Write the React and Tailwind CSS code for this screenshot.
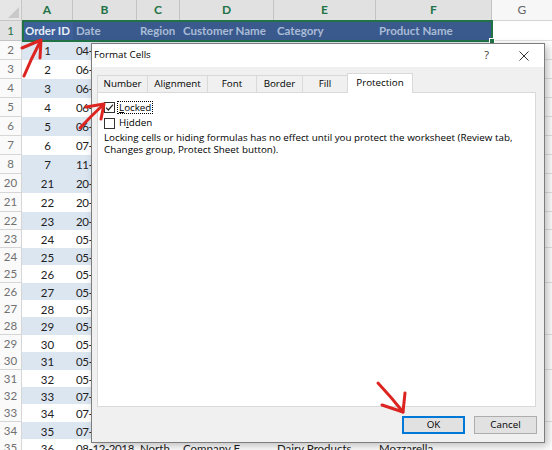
import React from 'react'

const COLS = 'grid grid-cols-[22px_51px_64px_43px_94px_102px_116px_1fr]'

const letters = ['A', 'B', 'C', 'D', 'E', 'F']
const headers = ['Order ID', 'Date', 'Region', 'Customer Name', 'Category', 'Product Name']

const rows = [
  { n: 2, id: 1, date: '04-01-2018', h: 'h-[19px]' },
  { n: 3, id: 2, date: '06-01-2018', h: 'h-[19px]' },
  { n: 4, id: 3, date: '06-01-2018', h: 'h-[19px]' },
  { n: 5, id: 4, date: '06-01-2018', h: 'h-[19px]' },
  { n: 6, id: 5, date: '06-01-2018', h: 'h-[19px]' },
  { n: 7, id: 6, date: '07-01-2018', h: 'h-[19px]' },
  { n: 8, id: 7, date: '11-01-2018', h: 'h-[19px]' },
  { n: 20, id: 21, date: '20-02-2018', h: 'h-[19px]' },
  { n: 21, id: 22, date: '20-02-2018', h: 'h-[19px]' },
  { n: 22, id: 23, date: '20-02-2018', h: 'h-[18px]' },
  { n: 23, id: 24, date: '05-03-2018', h: 'h-[18px]' },
  { n: 24, id: 25, date: '05-03-2018', h: 'h-[17px]' },
  { n: 25, id: 26, date: '05-03-2018', h: 'h-[18px]' },
  { n: 26, id: 27, date: '05-03-2018', h: 'h-[17px]' },
  { n: 27, id: 28, date: '05-03-2018', h: 'h-[17px]' },
  { n: 28, id: 29, date: '05-03-2018', h: 'h-[18px]' },
  { n: 29, id: 30, date: '05-03-2018', h: 'h-[17px]' },
  { n: 30, id: 31, date: '05-03-2018', h: 'h-[18px]' },
  { n: 31, id: 32, date: '05-03-2018', h: 'h-[17px]' },
  { n: 32, id: 33, date: '07-04-2018', h: 'h-[17px]' },
  { n: 33, id: 34, date: '07-04-2018', h: 'h-[18px]' },
  { n: 34, id: 35, date: '07-04-2018', h: 'h-[17px]' },
  {
    n: 35,
    id: 36,
    date: '08-12-2018',
    h: 'h-[17px]',
    rest: ['North', 'Company F', 'Dairy Products', 'Mozzarella'],
  },
]

const tabs = [
  { label: 'Number', w: 'w-[50px]' },
  { label: 'Alignment', w: 'w-[60px]' },
  { label: 'Font', w: 'w-[49px]' },
  { label: 'Border', w: 'w-[46px]' },
  { label: 'Fill', w: 'w-[45px]' },
]

const Checkbox = ({ checked }) => (
  <span className="w-[11px] h-[11px] border border-[#333] bg-white flex items-center justify-center">
    {checked && (
      <svg width="9" height="9" viewBox="0 0 9 9">
        <path d="M1 4.6 L3.4 7 L8 1.6" stroke="#222" strokeWidth="1.2" fill="none" />
      </svg>
    )}
  </span>
)

const FormatCells = () => (
  <div className="absolute left-[91px] top-[43px] w-[454px] h-[400px] border border-[#7d7d7d] bg-[#f0f0f0] shadow-[3px_3px_8px_rgba(0,0,0,0.25)] flex flex-col font-['Open_Sans',sans-serif] text-[9.8px] text-black">
    {/* Title bar */}
    <div className="h-[23px] bg-white flex items-center pl-[2px] pr-[15px]">
      <span className="text-[9.8px]">Format Cells</span>
      <span className="ml-auto text-[11px] text-[#333]">?</span>
      <svg className="ml-[30px]" width="10" height="10" viewBox="0 0 10 10">
        <path d="M0.5 0.5 L9.5 9.5 M9.5 0.5 L0.5 9.5" stroke="#333" strokeWidth="1" />
      </svg>
    </div>

    {/* Body */}
    <div className="flex-1 flex flex-col pt-[6px] pl-[5px] pr-[7px] pb-[8px]">
      <div className="flex items-end h-[20px] -mb-px relative z-10">
        {tabs.map((t) => (
          <div
            key={t.label}
            className={`${t.w} h-[17px] mb-px border-l border-t border-[#d9d9d9] flex items-center justify-center last:border-r`}
          >
            {t.label}
          </div>
        ))}
        <div className="w-[66px] h-[20px] border-l border-t border-r border-[#d9d9d9] bg-white flex items-center justify-center">
          Protection
        </div>
      </div>

      <div className="flex-1 mr-px border border-[#d9d9d9] bg-white pt-[7px] pl-[6px]">
        <div className="h-[14px] flex items-center gap-[2px]">
          <Checkbox checked />
          <span className="border border-dotted border-black px-px leading-[11px]">
            <span className="underline">L</span>ocked
          </span>
        </div>
        <div className="h-[14px] mt-[2px] flex items-center gap-[3px]">
          <Checkbox />
          <span className="px-px">
            H<span className="underline">i</span>dden
          </span>
        </div>
        <p className="mt-[2px] leading-[12px]">
          Locking cells or hiding formulas has no effect until you protect the worksheet (Review tab,
          <br />
          Changes group, Protect Sheet button).
        </p>
      </div>

      <div className="flex justify-end gap-[9px] mt-[9px]">
        <button className="w-[63px] h-[18px] bg-[#e1e1e1] border border-[#0078d7] shadow-[inset_0_0_0_1px_#0078d7] flex items-center justify-center">
          OK
        </button>
        <button className="w-[63px] h-[18px] bg-[#e1e1e1] border border-[#adadad] flex items-center justify-center">
          Cancel
        </button>
      </div>
    </div>
  </div>
)

export default function App() {
  return (
    <div className="relative w-[552px] h-[450px] overflow-hidden bg-white font-['Lato',sans-serif] text-[11.5px] text-[#222]">
      {/* Column headers */}
      <div className={`${COLS} h-[21px]`}>
        <div className="relative bg-[#e6e6e6] border-r border-b border-[#c6c6c6]">
          <svg className="absolute right-[2px] bottom-[2px]" width="11" height="11" viewBox="0 0 11 11">
            <path d="M11 0 L11 11 L0 11 Z" fill="#c9c9c9" />
          </svg>
        </div>
        {letters.map((l) => (
          <div
            key={l}
            className="bg-[#e1e1e1] border-r border-b border-[#c3c3c3] flex items-center justify-center text-[12px] font-bold text-[#217346]"
          >
            {l}
          </div>
        ))}
        <div className="bg-[#f7f7f7] border-b border-[#d4d4d4] flex items-center justify-center text-[12px] text-[#666]">
          G
        </div>
      </div>

      {/* Row 1 */}
      <div className={`${COLS} h-[20px]`}>
        <div className="bg-[#e1e1e1] border-r border-b border-[#c3c3c3] flex items-center justify-center text-[#217346]">
          1
        </div>
        {headers.map((h, i) => (
          <div
            key={h}
            className={`flex items-center pl-[3px] font-bold whitespace-nowrap overflow-hidden ${
              i === 0 ? 'bg-[#3d6099] text-[#e6edf7]' : 'bg-[#3a5a8e] text-[#a9bbd5]'
            }`}
          >
            {h}
          </div>
        ))}
        <div className="bg-white border-b border-[#e1e1e1]" />
      </div>

      {/* Data rows */}
      {rows.map((r) => {
        const band = r.n % 2 === 0 ? 'bg-[#dce6f1]' : 'bg-white'
        const rest = r.rest || ['', '', '', '']
        return (
          <div key={r.n} className={`${COLS} ${r.h}`}>
            <div className="bg-[#fafafa] border-r border-b border-[#d6d6d6] flex items-center justify-center text-[#707070]">
              {r.n}
            </div>
            <div className={`${band} flex items-center justify-center`}>{r.id}</div>
            <div className={`${band} flex items-center pl-[3px] tracking-[-0.4px] whitespace-nowrap overflow-hidden`}>
              {r.date}
            </div>
            {rest.map((v, i) => (
              <div key={i} className={`${band} flex items-center pl-[3px] whitespace-nowrap overflow-hidden`}>
                {v}
              </div>
            ))}
            <div className="bg-white border-b border-[#e1e1e1]" />
          </div>
        )
      })}

      {/* Selection A1:F1 */}
      <div className="absolute left-[22px] top-[20px] w-[471px] h-[22px] border-2 border-[#217346]" />
      <div className="absolute left-[489px] top-[38px] w-[6px] h-[6px] bg-[#217346] border border-white" />

      <FormatCells />

      {/* Hand-drawn arrows */}
      <svg className="absolute left-0 top-0 pointer-events-none" width="552" height="450">
        <g stroke="#dc2420" strokeWidth="3" strokeLinecap="round" strokeLinejoin="round" fill="none">
          <path d="M24 76 Q31 59 40 42" />
          <path d="M22 48 L41 40 L40 58" />
          <path d="M80 128 Q92 115 103 105" />
          <path d="M86 107 L104 104 L101 119" />
          <path d="M378 383 Q392 398 403 412" />
          <path d="M382 405 L403 412 L405 393" />
        </g>
      </svg>
    </div>
  )
}
